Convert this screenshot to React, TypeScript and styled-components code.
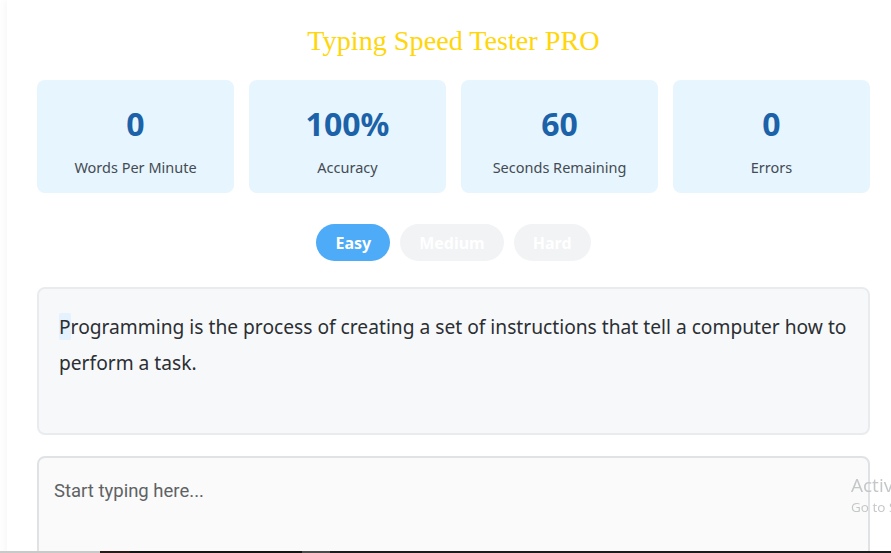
import React, { FC, useState } from 'react';
import styled, { createGlobalStyle } from 'styled-components';

const GlobalStyle = createGlobalStyle`
  html, body {
    margin: 0;
    padding: 0;
    background: #ffffff;
    overflow: hidden;
  }
  * {
    box-sizing: border-box;
  }
`;

const Container = styled.div`
  margin-left: 7px;
  width: 893px;
  min-height: 100vh;
  padding: 20px 30px;
  background: #ffffff;
  box-shadow: 0 0 10px rgba(0, 0, 0, 0.06);
  font-family: 'Noto Sans', 'Open Sans', sans-serif;
`;

const Title = styled.h1`
  margin: 0;
  height: 42px;
  line-height: 42px;
  text-align: center;
  font-family: 'Liberation Serif', serif;
  font-weight: normal;
  font-size: 28.2px;
  color: #ffd60a;
`;

const StatsGrid = styled.div`
  display: grid;
  grid-template-columns: repeat(4, 1fr);
  gap: 15px;
  margin-top: 18px;
`;

const StatCard = styled.div`
  height: 113px;
  border-radius: 8px;
  background: #e7f5fe;
  display: flex;
  flex-direction: column;
  align-items: center;
  padding-top: 24px;
`;

const StatValue = styled.div`
  font-size: 32px;
  font-weight: 700;
  line-height: 40px;
  color: #1b62a8;
`;

const StatLabel = styled.div`
  margin-top: 12px;
  font-size: 14.5px;
  line-height: 22px;
  color: #444b52;
`;

const LevelRow = styled.div`
  display: flex;
  justify-content: center;
  gap: 10px;
  margin-top: 31px;
`;

const LevelButton = styled.button<{ $active: boolean }>`
  height: 37px;
  padding: 0 19px;
  border: none;
  border-radius: 20px;
  font-family: 'Noto Sans', 'Open Sans', sans-serif;
  font-size: 16px;
  font-weight: 700;
  color: #ffffff;
  background: ${p => (p.$active ? '#4dabf7' : '#f1f3f5')};
  cursor: pointer;
`;

const TextDisplay = styled.div`
  margin-top: 26px;
  height: 148px;
  border: 2px solid #e9ecef;
  border-radius: 8px;
  background: #f7f8fa;
  padding: 20px 14px 20px 20px;
  font-size: 19.2px;
  line-height: 36px;
  color: #2b2f33;
`;

const CurrentChar = styled.span`
  background: #e3f2fd;
  border-radius: 2px;
`;

const TypingArea = styled.textarea`
  display: block;
  width: 100%;
  margin-top: 21px;
  height: 160px;
  border: 2px solid #e0e3e6;
  border-radius: 8px;
  background: #fafafa;
  padding: 22px 15px;
  font-family: Roboto, 'Liberation Sans', sans-serif;
  font-size: 18.5px;
  color: #333;
  resize: none;
  outline: none;
  &::placeholder {
    color: #5f6265;
  }
`;

const Watermark = styled.div`
  position: fixed;
  left: 851px;
  top: 472px;
  font-family: 'Open Sans', sans-serif;
  color: #c4c6c8;
  white-space: nowrap;
  pointer-events: none;
`;

const WatermarkTitle = styled.div`
  font-size: 19px;
  line-height: 26px;
`;

const WatermarkSub = styled.div`
  font-size: 13.5px;
  line-height: 18px;
`;

const Taskbar = styled.div`
  position: fixed;
  left: 0;
  right: 0;
  bottom: 0;
  height: 2px;
  display: flex;
`;

const TaskbarPart = styled.div<{ $w?: number; $c: string }>`
  width: ${p => (p.$w ? `${p.$w}px` : 'auto')};
  flex: ${p => (p.$w ? 'none' : '1')};
  background: ${p => p.$c};
`;

const passage =
  'Programming is the process of creating a set of instructions that tell a computer how to perform a task.';

const stats = [
  { value: '0', label: 'Words Per Minute' },
  { value: '100%', label: 'Accuracy' },
  { value: '60', label: 'Seconds Remaining' },
  { value: '0', label: 'Errors' },
];

const levels = ['Easy', 'Medium', 'Hard'];

const App: FC = () => {
  const [level, setLevel] = useState<string>('Easy');
  const [text, setText] = useState<string>('');

  return (
    <>
      <GlobalStyle />
      <Container>
        <Title>Typing Speed Tester PRO</Title>
        <StatsGrid>
          {stats.map(s => (
            <StatCard key={s.label}>
              <StatValue>{s.value}</StatValue>
              <StatLabel>{s.label}</StatLabel>
            </StatCard>
          ))}
        </StatsGrid>
        <LevelRow>
          {levels.map(l => (
            <LevelButton key={l} $active={l === level} onClick={() => setLevel(l)}>
              {l}
            </LevelButton>
          ))}
        </LevelRow>
        <TextDisplay>
          <CurrentChar>{passage[0]}</CurrentChar>
          {passage.slice(1)}
        </TextDisplay>
        <TypingArea
          placeholder='Start typing here...'
          value={text}
          onChange={e => setText(e.target.value)}
        />
      </Container>
      <Watermark>
        <WatermarkTitle>Activate Windows</WatermarkTitle>
        <WatermarkSub>Go to Settings to activate Windows.</WatermarkSub>
      </Watermark>
      <Taskbar>
        <TaskbarPart $w={100} $c='#c9c9c9' />
        <TaskbarPart $w={30} $c='#2a1a18' />
        <TaskbarPart $w={172} $c='#141414' />
        <TaskbarPart $w={28} $c='#4a4a4a' />
        <TaskbarPart $c='#1c1c1e' />
      </Taskbar>
    </>
  );
};

export default App;
